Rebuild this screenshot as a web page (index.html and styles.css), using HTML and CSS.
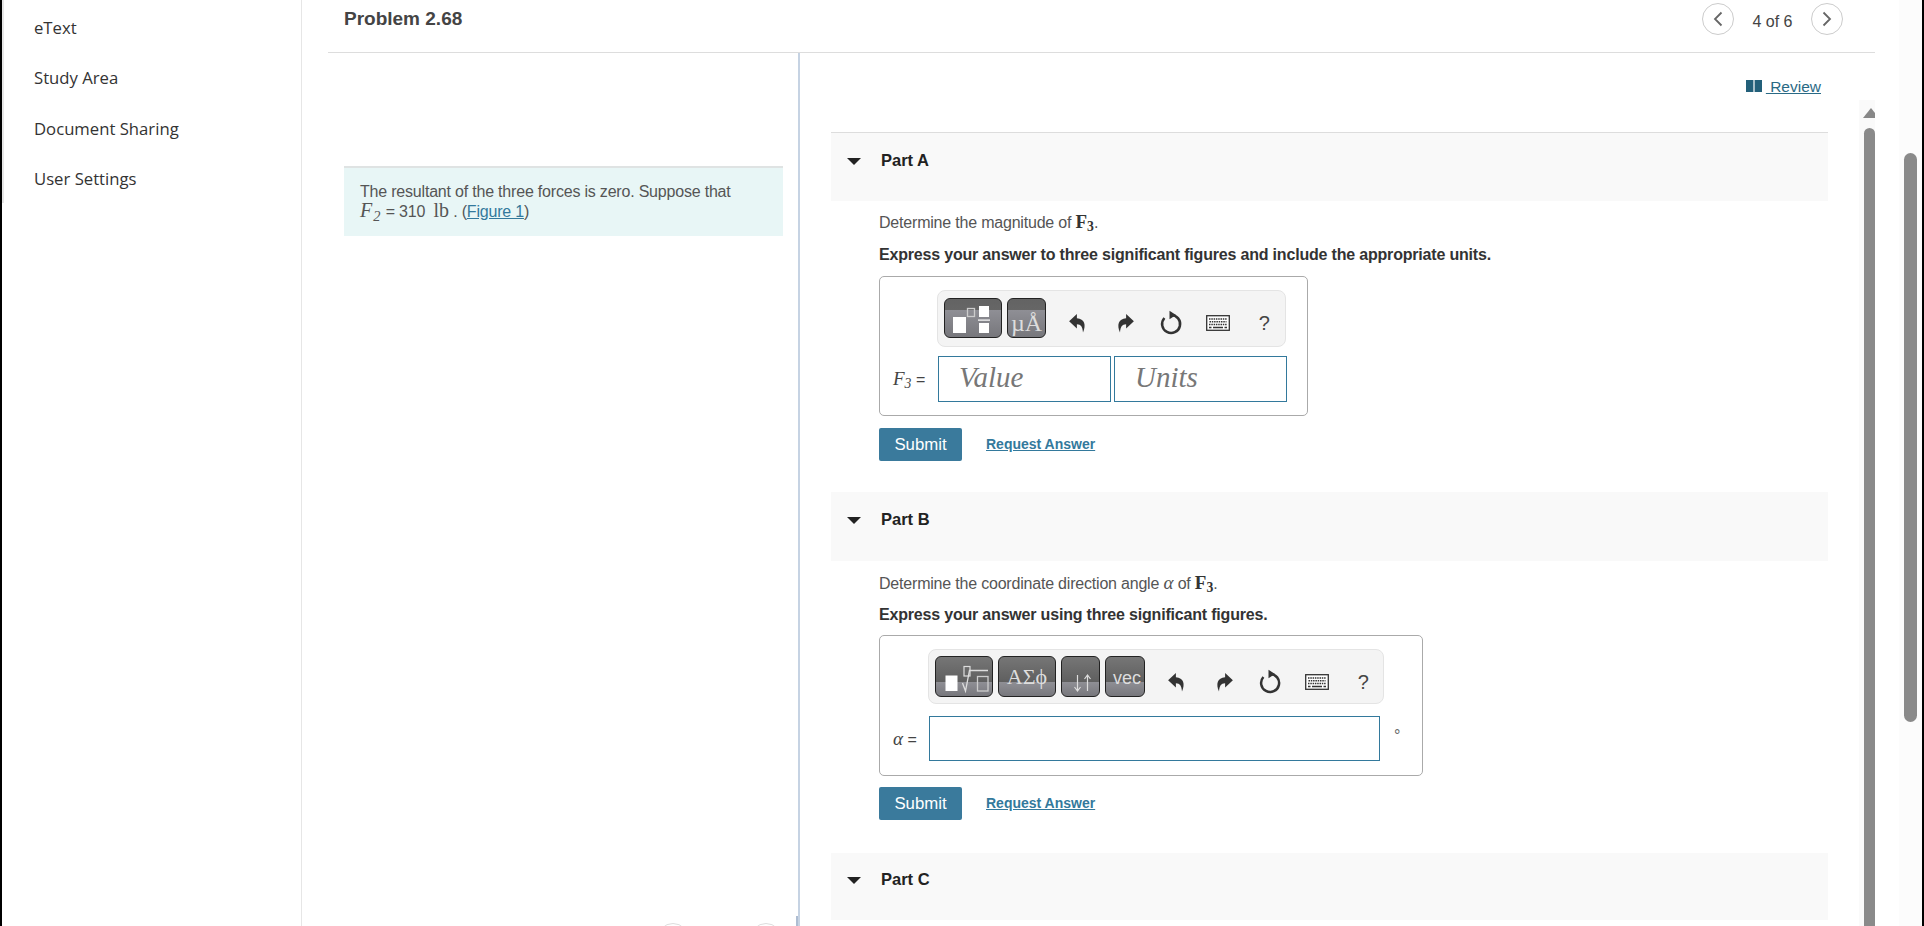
FILE: index.html
```html
<!DOCTYPE html>
<html lang="en">
<head>
<meta charset="utf-8">
<title>Problem 2.68</title>
<link rel="stylesheet" href="styles.css">
</head>
<body>
<div class="edge-left"></div>
<nav class="sidebar">
  <a class="nav-link">eText</a>
  <a class="nav-link">Study Area</a>
  <a class="nav-link">Document Sharing</a>
  <a class="nav-link">User Settings</a>
</nav>
<main class="main">
  <header class="topbar">
    <h1 class="title">Problem 2.68</h1>
    <div class="pager">
      <button class="circle"><svg width="12" height="16" viewBox="0 0 12 16"><path d="M9.500 1.500 3 8l6.500 6.500" fill="none" stroke="#666" stroke-width="1.800"/></svg></button>
      <span class="pager-text">4 of 6</span>
      <button class="circle"><svg width="12" height="16" viewBox="0 0 12 16"><path d="M2.500 1.500 9 8l-6.500 6.500" fill="none" stroke="#666" stroke-width="1.800"/></svg></button>
    </div>
  </header>
  <div class="columns">
    <section class="left-col">
      <div class="intro">
        <p class="intro-text">The resultant of the three forces is zero. Suppose that<br><span class="math-i math-intro">F<sub>2</sub></span> = 310 <span class="math-u">lb</span> . (<a class="link">Figure 1</a>)</p>
      </div>
      <div class="fig-pager"><span class="fig-circle"></span><span class="fig-circle"></span></div>
    </section>
    <section class="right-col">
      <div class="review-row">
        <svg class="book" width="16" height="12" viewBox="0 0 16 12"><path d="M0 0h7.400v12H0zM8.600 0H16v12H8.600z" fill="#23607a"/></svg>
        <a class="review">&nbsp;Review</a>
      </div>
      <div class="scroll-area">
        <div class="parts">

          <div class="part-head part-head-a"><span class="caret"></span><span class="part-name">Part A</span></div>
          <div class="part-body">
            <p class="prompt">Determine the magnitude of <b class="math-b">F<sub>3</sub></b>.</p>
            <p class="instr">Express your answer to three significant figures and include the appropriate units.</p>
            <div class="answer answer-a">
              <div class="toolbar toolbar-a">
                <span class="tool tool-wide tool-high">
                  <svg width="56" height="38" viewBox="0 0 56 38"><rect x="8" y="18" width="13" height="16" fill="#fff"/><rect x="22.500" y="9.500" width="7" height="8" fill="none" stroke="#ccc" stroke-width="1.300"/><rect x="34" y="7" width="10" height="11" fill="#fff"/><rect x="33" y="20.500" width="12" height="1.200" fill="#fff"/><rect x="34" y="24" width="10" height="10" fill="#fff"/></svg>
                </span>
                <span class="tool tool-mu tool-high"><span class="tool-serif tool-mu-text">µÅ</span></span>
                <span class="slots slots-a">
                  <span class="slot"><svg width="20" height="20" viewBox="0 0 18 18"><path d="M8 1 1 7.500l7 6.500v-3.800c3.800 0 5 2.500 5.500 7.300C16.500 11 15 5.200 8 4.800z" fill="#333"/></svg></span>
                  <span class="slot"><svg width="20" height="20" viewBox="0 0 18 18"><path d="M10 1l7 6.500-7 6.500v-3.800c-3.800 0-5 2.500-5.500 7.300C1.500 11 3 5.200 10 4.800z" fill="#333"/></svg></span>
                  <span class="slot"><svg width="24" height="26" viewBox="0 0 24 26"><path d="M12 5A9 9 0 1 1 5.400 8" fill="none" stroke="#333" stroke-width="2.500"/><path d="M10.500 .8 17 5l-6.500 4.200z" fill="#333"/></svg></span>
                  <span class="slot"><svg width="24" height="16" viewBox="0 0 24 16"><rect x=".7" y=".7" width="22.600" height="14.600" fill="#fff" stroke="#333" stroke-width="1.300"/><path d="M3 4h18M3.500 6.800h17M3 9.500h18" stroke="#333" stroke-width="1.500" stroke-dasharray="1.500 .8" fill="none"/><path d="M3 12.500h2.500M7 12.500h10M18.500 12.500H21" stroke="#333" stroke-width="1.300" fill="none"/></svg></span>
                  <span class="slot slot-q">?</span>
                </span>
              </div>
              <div class="row row-a">
                <span class="label label-a"><span class="math-i">F<sub>3</sub></span> =</span>
                <input class="field field-half" placeholder="Value">
                <input class="field field-half" placeholder="Units">
              </div>
            </div>
            <div class="actions actions-a"><button class="submit">Submit</button><a class="request">Request Answer</a></div>
          </div>

          <div class="part-head"><span class="caret"></span><span class="part-name">Part B</span></div>
          <div class="part-body">
            <p class="prompt prompt-b">Determine the coordinate direction angle <span class="math-i">α</span> of <b class="math-b">F<sub>3</sub></b>.</p>
            <p class="instr instr-b">Express your answer using three significant figures.</p>
            <div class="answer answer-b">
              <div class="toolbar toolbar-b">
                <span class="tool tool-wide2 tool-low">
                  <svg width="56" height="39" viewBox="0 0 56 39"><rect x="9.500" y="18.500" width="12" height="15.500" fill="#fff"/><rect x="28" y="9.500" width="6" height="9.500" fill="none" stroke="#ddd" stroke-width="1.200"/><path d="M26.500 26l3 8 4-20.500H52" fill="none" stroke="#ddd" stroke-width="1.300"/><rect x="41.500" y="19.500" width="10.500" height="14.500" fill="none" stroke="#ccc" stroke-width="1.300"/></svg>
                </span>
                <span class="tool tool-greek tool-low"><span class="tool-serif tool-greek-text">ΑΣϕ</span></span>
                <span class="tool tool-arrows tool-low">
                  <svg width="37" height="39" viewBox="0 0 37 39"><path d="M15.500 18v16M12.500 30l3 4 3-4M25.500 34V18M22.500 22l3-4 3 4" fill="none" stroke="#ddd" stroke-width="1.200"/></svg>
                </span>
                <span class="tool tool-vec tool-low"><span class="tool-vec-text">vec</span></span>
                <span class="slots slots-b">
                  <span class="slot"><svg width="20" height="20" viewBox="0 0 18 18"><path d="M8 1 1 7.500l7 6.500v-3.800c3.800 0 5 2.500 5.500 7.300C16.500 11 15 5.200 8 4.800z" fill="#333"/></svg></span>
                  <span class="slot"><svg width="20" height="20" viewBox="0 0 18 18"><path d="M10 1l7 6.500-7 6.500v-3.800c-3.800 0-5 2.500-5.500 7.300C1.500 11 3 5.200 10 4.800z" fill="#333"/></svg></span>
                  <span class="slot"><svg width="24" height="26" viewBox="0 0 24 26"><path d="M12 5A9 9 0 1 1 5.400 8" fill="none" stroke="#333" stroke-width="2.500"/><path d="M10.500 .8 17 5l-6.500 4.200z" fill="#333"/></svg></span>
                  <span class="slot"><svg width="24" height="16" viewBox="0 0 24 16"><rect x=".7" y=".7" width="22.600" height="14.600" fill="#fff" stroke="#333" stroke-width="1.300"/><path d="M3 4h18M3.500 6.800h17M3 9.500h18" stroke="#333" stroke-width="1.500" stroke-dasharray="1.500 .8" fill="none"/><path d="M3 12.500h2.500M7 12.500h10M18.500 12.500H21" stroke="#333" stroke-width="1.300" fill="none"/></svg></span>
                  <span class="slot slot-q">?</span>
                </span>
              </div>
              <div class="row row-b">
                <span class="label label-b"><span class="math-i">α</span> =</span>
                <input class="field field-full">
                <span class="degree">°</span>
              </div>
            </div>
            <div class="actions actions-b"><button class="submit">Submit</button><a class="request">Request Answer</a></div>
          </div>

          <div class="part-head part-head-c"><span class="caret"></span><span class="part-name">Part C</span></div>
        </div>
        <div class="inner-scroll">
          <svg class="inner-arrow" width="12" height="10" viewBox="0 0 12 10"><path d="M0 10 8 0l8 10z" fill="#888"/></svg>
          <div class="inner-thumb"></div>
        </div>
      </div>
    </section>
  </div>
</main>
<div class="page-scroll"><div class="page-thumb"></div></div>
<div class="edge-right"></div>
</body>
</html>
```
FILE: styles.css
```css
* { box-sizing: border-box; }
html, body { margin: 0; height: 926px; overflow: hidden; }
body { display: flex; background: #fff; color: #333; font-family: "Liberation Sans", Arial, sans-serif; font-size: 16px; }
p, h1 { margin: 0; }
a { cursor: pointer; }
sub { font-size: 72%; line-height: 0; vertical-align: -0.25em; }

.edge-left { width: 2px; flex: none; height: 926px; background: #000; position: relative; }
.edge-left::after { content: ""; position: absolute; left: 2px; top: 0; width: 2px; height: 203px; background: #e6e6e6; }
.edge-right { width: 2px; flex: none; background: #000; }

.sidebar { width: 300px; flex: none; border-right: 1px solid #e6e6e6; padding: 2.500px 0 0 32px; display: flex; flex-direction: column; font-family: "Open Sans", sans-serif; }
.nav-link { height: 50.500px; line-height: 50.500px; color: #333; font-size: 16.700px; }

.main { width: 1597px; flex: none; height: 926px; padding: 0 24px 0 26px; display: flex; flex-direction: column; }
.topbar { height: 53px; flex: none; border-bottom: 1px solid #ddd; display: flex; justify-content: space-between; align-items: flex-start; }
.title { font-size: 19px; font-weight: bold; color: #444; line-height: 22px; padding: 8px 0 0 16px; }
.pager { display: flex; align-items: center; padding: 3px 32px 0 0; }
.pager-text { width: 77px; text-align: center; font-size: 16px; line-height: 20px; color: #444; padding-top: 6px; }
.circle { width: 32px; height: 32px; padding: 0; background: #fff; border: 1px solid #ccc; border-radius: 50%; display: flex; align-items: center; justify-content: center; }

.columns { flex: 1; display: flex; min-height: 0; }
.left-col { width: 472px; flex: none; border-right: 2px solid #c6d3e3; padding: 113px 15px 0 16px; overflow: hidden; position: relative; }
.left-col::after { content: ""; position: absolute; right: 0; bottom: 0; width: 2px; height: 10px; background: #aebdd2; }
.intro { height: 70px; background: #e8f6f6; border-top: 2px solid #dfe3e3; padding: 14px 15px 0 16px; }
.intro-text { font-size: 16px; letter-spacing: -0.200px; line-height: 19px; color: #555; }
.math-i { font-family: "Liberation Serif", serif; font-style: italic; font-size: 19px; letter-spacing: 0; }
.math-intro { font-size: 20px; letter-spacing: 1px; }
.math-u { font-family: "Liberation Serif", serif; font-size: 20px; padding: 0 0 0 4px; letter-spacing: 0; }
.math-b { font-family: "Liberation Serif", serif; font-weight: bold; font-size: 19px; letter-spacing: 0; color: #333; }
.link { color: #33799c; text-decoration: underline; }
.fig-pager { margin-top: 687px; padding-left: 313px; display: flex; gap: 61px; }
.fig-circle { width: 32px; height: 32px; border: 1px solid #ddd; border-radius: 50%; }

.right-col { flex: 1; padding-left: 31px; display: flex; flex-direction: column; min-width: 0; }
.review-row { height: 47px; flex: none; display: flex; justify-content: flex-end; align-items: flex-start; padding: 24px 54px 0 0; }
.book { margin: 3px 4px 0 0; }
.review { color: #2a6a85; text-decoration: underline; font-size: 15.500px; line-height: 20px; }
.scroll-area { flex: 1; display: flex; min-height: 0; justify-content: space-between; }
.parts { width: 997px; flex: none; padding-top: 32px; }
.part-head { height: 69px; background: #f9f9f9; display: flex; padding: 17px 0 0 16px; }
.part-head-a { border-top: 1px solid #ddd; }
.part-head-c { height: 67px; padding-top: 16px; }
.caret { width: 0; height: 0; border-left: 7px solid transparent; border-right: 7px solid transparent; border-top: 7px solid #222; margin-top: 8px; }
.part-name { margin-left: 20px; font-weight: bold; color: #222; font-size: 16.500px; line-height: 20px; }
.part-body { padding-left: 48px; }
.prompt { margin-top: 11px; font-size: 16px; letter-spacing: -0.200px; line-height: 20px; color: #555; }
.prompt-b { margin-top: 12px; }
.instr { margin-top: 12px; font-size: 16px; letter-spacing: -0.190px; line-height: 20px; font-weight: bold; color: #333; }
.instr-b { margin-top: 11px; }

.answer { margin-top: 11px; border: 1px solid #aaa; border-radius: 5px; }
.answer-a { width: 429px; height: 140px; padding: 13px 0 0 57px; }
.answer-b { width: 544px; height: 141px; margin-top: 10px; padding: 13px 0 0 48px; }
.toolbar { height: 57px; background: #f4f4f4; border: 1px solid #e4e4e4; border-radius: 8px; display: flex; align-items: flex-start; gap: 5px; padding: 7px 0 0 6px; }
.toolbar-a { width: 349px; }
.toolbar-b { width: 456px; height: 55px; padding-top: 6px; }

.tool { flex: none; height: 40px; border: 1px solid #222; border-radius: 6px; display: flex; align-items: center; justify-content: center; color: #ddd; overflow: hidden; }
.tool-high { background: linear-gradient(#636363 0, #666 11px, #8f8f95 11px, #77777c 100%); }
.tool-low { height: 41px; background: linear-gradient(#767676 0, #5f5f5f 25px, #8f8f95 25px, #77777c 100%); }
.tool-wide { width: 58px; }
.tool-mu { width: 39px; }
.tool-wide2 { width: 58px; }
.tool-greek { width: 58px; }
.tool-arrows { width: 39px; }
.tool-vec { width: 40px; }
.tool-serif { font-family: "Liberation Serif", serif; }
.tool-mu-text { font-size: 24px; padding-top: 10px; line-height: 28px; }
.tool-greek-text { font-size: 22px; line-height: 28px; }
.tool-vec-text { font-size: 18px; padding: 3px 0 0 4px; }
.slots { display: flex; align-items: center; height: 24px; }
.slots-a { margin: 13px 0 0 4px; }
.slots-b { margin: 14px 0 0 4px; }
.slot { width: 46.500px; height: 24px; display: flex; align-items: center; justify-content: center; }
.slot-q { font-size: 20px; color: #444; }

.row { display: flex; align-items: flex-start; padding-left: 13px; }
.row-a { margin: 9px 0 0 -57px; gap: 3px; }
.row-b { margin: 12px 0 0 -48px; }
.label { flex: none; color: #444; font-size: 16px; line-height: 46px; }
.label-a { width: 42px; }
.label-b { width: 36px; }
.field { height: 46px; border: 1px solid #33799c; padding: 0 20px 3px; background: #fff; font-family: "Liberation Serif", serif; font-style: italic; font-size: 29px; color: #555; outline: none; border-radius: 0; }
.field::placeholder { color: #777; opacity: 1; }
.field-half { width: 173px; }
.field-full { width: 451px; height: 45px; }
.degree { margin-left: 14px; padding-top: 6px; font-size: 16px; line-height: 28px; color: #666; }

.actions { display: flex; align-items: center; }
.actions-a { margin: 12px 0 31px; }
.actions-b { margin: 11px 0 33px; }
.submit { width: 83px; height: 33px; padding: 0; border: 0; border-radius: 2px; background: #3a7a9c; color: #fff; font-family: inherit; font-size: 16.800px; }
.request { margin-left: 24px; padding-bottom: 2px; color: #33799c; font-size: 14px; font-weight: bold; text-decoration: underline; }

.inner-scroll { width: 16px; flex: none; background: #fafafa; padding: 8px 0 0 4px; overflow: hidden; }
.inner-arrow { display: block; }
.inner-thumb { width: 11px; margin: 10px 0 0 1px; height: 900px; background: #8a8a8a; border-radius: 6px 6px 0 0; }

.page-scroll { width: 23px; flex: none; background: #fcfcfc; padding: 153px 0 0 5px; }
.page-thumb { width: 13px; height: 569px; background: #8a8a8a; border-radius: 7px; }
```
